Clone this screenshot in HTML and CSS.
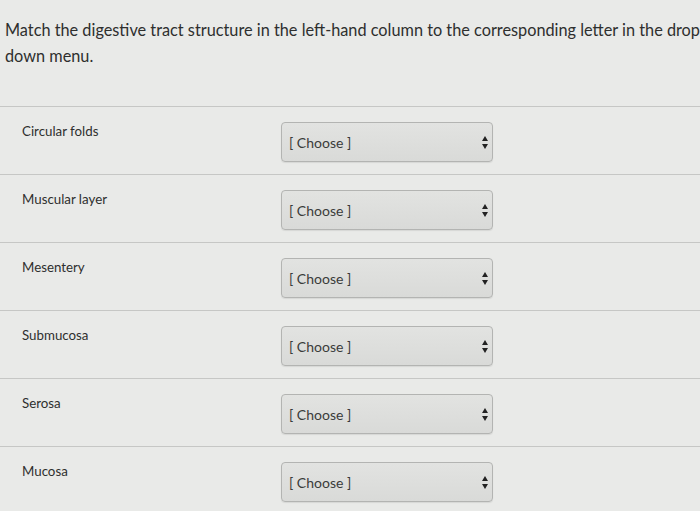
FILE: index.html
```html
<!DOCTYPE html>
<html lang="en">
<head>
  <meta charset="UTF-8">
  <title>Matching Question</title>
  <link rel="stylesheet" href="styles.css">
</head>
<body>

<div class="question">
  <p class="prompt">Match the digestive tract structure in the left-hand column to the corresponding letter in the drop down menu.</p>

  <div class="answers">
    <div class="answer">
      <label class="answer-label">Circular folds</label>
      <div class="select">[ Choose ]<span class="arrows"></span></div>
    </div>
    <div class="answer">
      <label class="answer-label">Muscular layer</label>
      <div class="select">[ Choose ]<span class="arrows"></span></div>
    </div>
    <div class="answer">
      <label class="answer-label">Mesentery</label>
      <div class="select">[ Choose ]<span class="arrows"></span></div>
    </div>
    <div class="answer">
      <label class="answer-label">Submucosa</label>
      <div class="select">[ Choose ]<span class="arrows"></span></div>
    </div>
    <div class="answer">
      <label class="answer-label">Serosa</label>
      <div class="select">[ Choose ]<span class="arrows"></span></div>
    </div>
    <div class="answer">
      <label class="answer-label">Mucosa</label>
      <div class="select">[ Choose ]<span class="arrows"></span></div>
    </div>
  </div>
</div>

</body>
</html>
```

FILE: styles.css
```css
body {
  margin: 0;
  background-color: #e9eae8;
  font-family: Lato, "Open Sans", sans-serif;
  color: #2e2f2e;
  overflow: hidden;
}
.question {
  width: 720px;
}
.prompt {
  margin: 0;
  padding: 17px 0 0 5px;
  font-size: 16.3px;
  line-height: 26px;
  height: 106px;
  box-sizing: border-box;
}
.answers {
  border-top: 1px solid #c6c7c5;
  width: 700px;
}
.answer {
  display: flex;
  height: 68px;
  box-sizing: border-box;
  border-bottom: 1px solid #c6c7c5;
}
.answer-label {
  width: 259px;
  padding: 15px 0 0 22px;
  font-size: 13.3px;
  line-height: 18px;
}
.select {
  margin-top: 15px;
  width: 212px;
  height: 40px;
  box-sizing: border-box;
  display: flex;
  align-items: center;
  justify-content: space-between;
  padding: 0 4px 0 7px;
  font-size: 14px;
  color: #3a3b3a;
  background: linear-gradient(#e2e3e1, #d9dad8);
  border: 1px solid #b3b4b2;
  border-radius: 4px;
  box-shadow: 0 1px 1px rgba(0, 0, 0, 0.08);
}
/* stacked up/down triangles of the native select */
.arrows {
  width: 6px;
  height: 13px;
  position: relative;
}
.arrows::before,
.arrows::after {
  content: "";
  position: absolute;
  left: 0;
  border-left: 3px solid transparent;
  border-right: 3px solid transparent;
}
.arrows::before {
  top: 0;
  border-bottom: 5px solid #222;
}
.arrows::after {
  bottom: 0;
  border-top: 5px solid #222;
}
```
